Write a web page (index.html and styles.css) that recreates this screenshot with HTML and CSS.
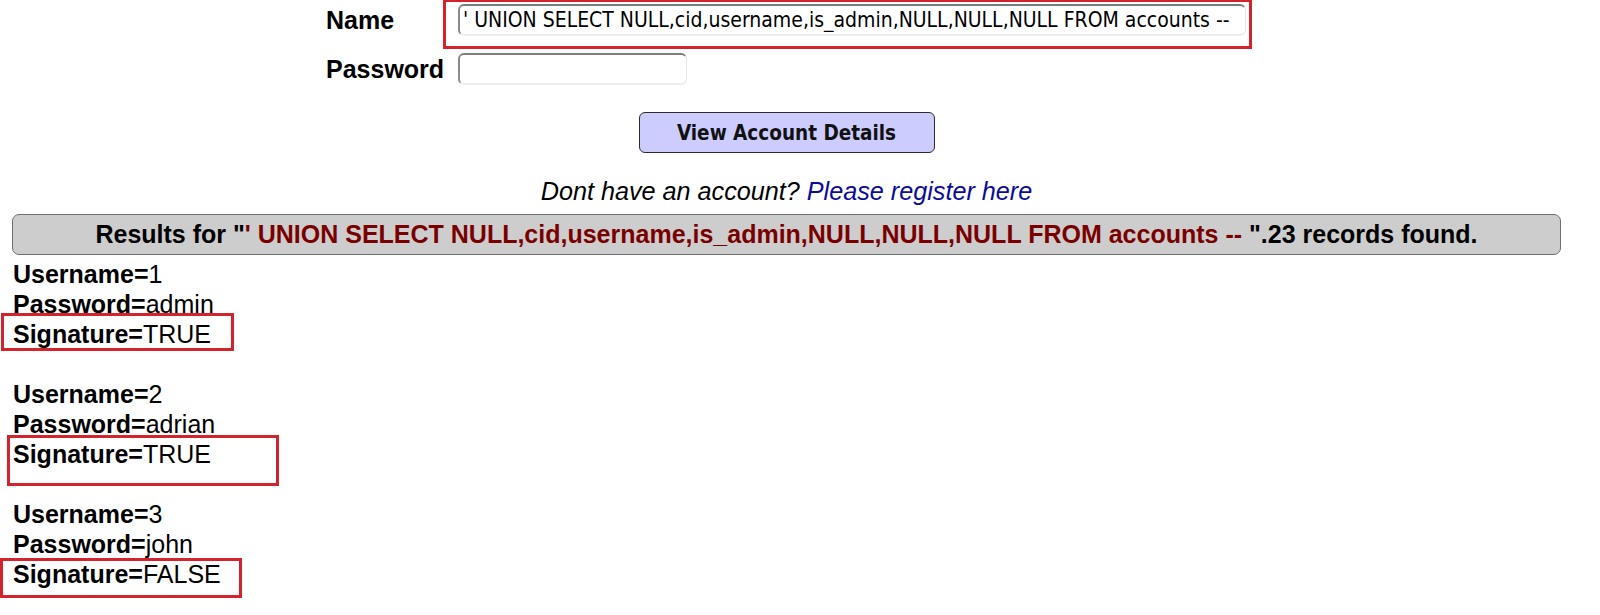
FILE: index.html
```html
<!DOCTYPE html>
<html lang="en">
<head>
<meta charset="utf-8">
<title>User Info</title>
<link rel="stylesheet" href="styles.css">
</head>
<body>
<div class="page">
  <form class="login">
    <div class="fields">
      <label class="lbl" for="name">Name</label>
      <div class="field-wrap">
        <input id="name" class="inp inp-name" type="text" value="' UNION SELECT NULL,cid,username,is_admin,NULL,NULL,NULL FROM accounts --">
        <span class="annot annot-name"></span>
      </div>
      <label class="lbl" for="pw">Password</label>
      <div class="field-wrap">
        <input id="pw" class="inp inp-pw" type="password">
      </div>
    </div>
    <div class="btn-row">
      <button type="button" class="btn">View Account Details</button>
    </div>
    <p class="register">Dont have an account? <a href="#" class="reg-link">Please register here</a></p>
  </form>

  <div class="results-bar">Results for "<span class="query">' UNION SELECT NULL,cid,username,is_admin,NULL,NULL,NULL FROM accounts -- </span>".23 records found.</div>

  <div class="records">
    <div class="record">
      <div class="line"><b>Username=</b>1</div>
      <div class="line"><b>Password=</b>admin</div>
      <div class="line sig"><b>Signature=</b>TRUE<span class="annot annot-1"></span></div>
    </div>
    <div class="record">
      <div class="line"><b>Username=</b>2</div>
      <div class="line"><b>Password=</b>adrian</div>
      <div class="line sig"><b>Signature=</b>TRUE<span class="annot annot-2"></span></div>
    </div>
    <div class="record">
      <div class="line"><b>Username=</b>3</div>
      <div class="line"><b>Password=</b>john</div>
      <div class="line sig"><b>Signature=</b>FALSE<span class="annot annot-3"></span></div>
    </div>
  </div>
</div>
</body>
</html>
```

FILE: styles.css
```css
html, body {
  margin: 0;
  padding: 0;
  background: #ffffff;
}

body {
  font-family: "Liberation Sans", Arial, sans-serif;
  font-size: 25px;
  color: #000000;
}

.page {
  width: 1549px;
  padding: 4px 0 0 12px;
}

/* ---------- login form ---------- */
.login {
  margin: 0;
}

.fields {
  display: grid;
  grid-template-columns: 132px auto;
  row-gap: 17px;
  align-items: center;
  margin-left: 314px;
}

.lbl {
  font-weight: bold;
  font-size: 25px;
  line-height: 32px;
}

.field-wrap {
  position: relative;
  display: flex;
  height: 32px;
}

.inp {
  box-sizing: border-box;
  height: 32px;
  margin: 0;
  padding: 0 0 0 3px;
  border-style: solid;
  border-width: 2px 1px 2px 2px;
  border-color: #7c7c7c #e4e4e4 #ededed #8a8a8a;
  border-radius: 6px;
  background: #ffffff;
  font-family: "DejaVu Sans Condensed", "DejaVu Sans", sans-serif;
  font-size: 21px;
  color: #000000;
  outline: none;
}

.inp-name {
  width: 788px;
}

.inp-pw {
  width: 229px;
}

.annot {
  position: absolute;
  box-sizing: border-box;
  border: 3px solid #d3232c;
  pointer-events: none;
}

.annot-name {
  top: -5px;
  left: -15px;
  width: 809px;
  height: 50px;
}

.btn-row {
  display: flex;
  justify-content: center;
  margin-top: 27px;
}

.btn {
  box-sizing: border-box;
  width: 296px;
  height: 41px;
  margin: 0;
  padding: 0;
  border: 1px solid #2b2b2b;
  border-radius: 6px;
  background: #ccccff;
  font-family: "DejaVu Sans Condensed", "DejaVu Sans", sans-serif;
  font-weight: bold;
  font-size: 20.5px;
  color: #111111;
}

.register {
  margin: 23px 0 0;
  text-align: center;
  font-style: italic;
  font-size: 25.2px;
  line-height: 30px;
}

.reg-link {
  color: #0b0b9e;
  text-decoration: none;
}

/* ---------- results ---------- */
.results-bar {
  box-sizing: border-box;
  height: 41px;
  margin-top: 8px;
  border: 1px solid #6e6e6e;
  border-radius: 7px;
  background: #cdcdcd;
  text-align: center;
  font-weight: bold;
  line-height: 39px;
  white-space: pre;
}

.query {
  color: #7a0000;
}

.records {
  margin-top: 4px;
  padding-left: 1px;
}

.record {
  margin-bottom: 30px;
}

.line {
  line-height: 30px;
  height: 30px;
  white-space: nowrap;
}

.sig {
  position: relative;
}

.annot-1 {
  top: -6px;
  left: -12px;
  width: 233px;
  height: 38px;
}

.annot-2 {
  top: -4px;
  left: -6px;
  width: 272px;
  height: 51px;
}

.annot-3 {
  top: -1px;
  left: -13px;
  width: 242px;
  height: 40px;
}
```
